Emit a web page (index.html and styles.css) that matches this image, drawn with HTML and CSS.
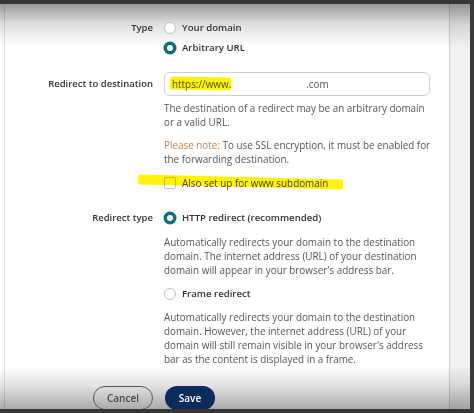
FILE: index.html
```html
<!DOCTYPE html>
<html>
<head>
<meta charset="utf-8">
<link rel="stylesheet" href="styles.css">
</head>
<body>
<div class="screen">
  <div class="bar"></div>
  <div class="middle">
    <div class="edge-left"></div>
    <div class="panel">
      <div class="row row-type">
        <div class="label">Type</div>
        <div class="field">
          <div class="option"><span class="radio"></span><span class="opt-text">Your domain</span></div>
          <div class="option"><span class="radio checked"></span><span class="opt-text">Arbitrary URL</span></div>
        </div>
      </div>
      <div class="row row-dest">
        <div class="label label-mid">Redirect to destination</div>
        <div class="field">
          <div class="input"><span class="url-start">https://www.</span><span class="url-end">.com</span><span class="mark mark-url"></span></div>
          <p class="hint">The destination of a redirect may be an arbitrary domain<br>or a valid URL.</p>
          <p class="hint note"><span class="note-label">Please note:</span> To use SSL encryption, it must be enabled for<br>the forwarding destination.</p>
          <div class="option check-option"><span class="checkbox"></span><span class="check-text">Also set up for www subdomain</span><span class="mark mark-check"></span></div>
        </div>
      </div>
      <div class="row row-rtype">
        <div class="label">Redirect type</div>
        <div class="field">
          <div class="option"><span class="radio checked"></span><span class="opt-text">HTTP redirect (recommended)</span></div>
          <p class="hint desc">Automatically redirects your domain to the destination<br>domain. The internet address (URL) of your destination<br>domain will appear in your browser's address bar.</p>
          <div class="option option-frame"><span class="radio"></span><span class="opt-text">Frame redirect</span></div>
          <p class="hint desc desc-frame">Automatically redirects your domain to the destination<br>domain. However, the internet address (URL) of your<br>domain will still remain visible in your browser's address<br>bar as the content is displayed in a frame.</p>
        </div>
      </div>
      <div class="actions">
        <button class="btn btn-cancel">Cancel</button>
        <button class="btn btn-save">Save</button>
      </div>
    </div>
    <div class="edge-right"></div>
    <div class="edge-dark"></div>
  </div>
  <div class="bar"></div>
</div>
</body>
</html>
```
FILE: styles.css
```css
html, body {
  margin: 0;
  padding: 0;
}
body {
  width: 474px;
  height: 413px;
  overflow: hidden;
  font-family: "Open Sans", "Liberation Sans", sans-serif;
  color: #3c3c3c;
  background: #2f2f2f;
}
.screen {
  display: flex;
  flex-direction: column;
  width: 474px;
  height: 413px;
}
.bar {
  height: 4px;
  background: #353535;
  flex: none;
}
.middle {
  flex: 1;
  display: flex;
  min-height: 0;
  background: linear-gradient(to bottom, rgba(0,0,0,0.4) 0, rgba(0,0,0,0.13) 20px, rgba(0,0,0,0) 42px, rgba(0,0,0,0) 362px, rgba(0,0,0,0.1) 380px, rgba(0,0,0,0.33) 100%), #fff;
}
.edge-left {
  width: 4px;
  flex: none;
  border-right: 1px solid rgba(0,0,0,0.12);
}
.edge-right {
  width: 20px;
  flex: none;
  border-left: 1px solid rgba(0,0,0,0.14);
  background: rgba(60,60,100,0.07);
}
.edge-dark {
  width: 4px;
  flex: none;
  background: #3a3a3a;
}
.panel {
  flex: 1;
  min-width: 0;
  overflow: hidden;
  padding-top: 14px;
  font-size: 9.9px;
  line-height: 14px;
}
.row {
  display: grid;
  grid-template-columns: 148px 1fr;
  column-gap: 11px;
  padding-right: 21px;
}
.label {
  text-align: right;
  font-weight: 600;
  color: #333;
  font-size: 9.5px;
  line-height: 20px;
}
.label-mid {
  line-height: 24px;
}
.field {
  display: flex;
  flex-direction: column;
}
.option {
  display: flex;
  align-items: center;
  gap: 6px;
  height: 20px;
  position: relative;
}
.opt-text {
  font-weight: 600;
  font-size: 9.6px;
  color: #333;
}
.radio {
  width: 10px;
  height: 10px;
  border-radius: 50%;
  border: 1px solid #bfbfbf;
  background: #fff;
  flex: none;
}
.radio.checked {
  width: 6px;
  height: 6px;
  border: 3px solid #0d6f80;
  background: #fff;
  box-shadow: 0 0 0 0.5px #0d6f80;
}
.row-dest {
  margin-top: 14px;
}
.input {
  position: relative;
  height: 24px;
  border: 1px solid #cfcfcf;
  border-radius: 6px;
  box-sizing: border-box;
  display: flex;
  align-items: center;
  padding-left: 7px;
  color: #555;
  font-size: 9.9px;
}
.url-end {
  margin-left: 75px;
}
.hint {
  margin: 5px 0 0;
  color: #555;
  white-space: nowrap;
}
.note {
  margin-top: 9px;
}
.note-label {
  color: #c9804a;
}
.check-option {
  margin-top: 7px;
}
.checkbox {
  width: 10px;
  height: 10px;
  border: 1px solid #c4c4c4;
  border-radius: 2px;
  flex: none;
}
.check-text {
  color: #444;
  font-size: 9.9px;
}
.mark {
  position: absolute;
  background: #fff200;
  mix-blend-mode: multiply;
  opacity: 0.95;
}
.mark-url {
  left: 5px;
  top: 4px;
  width: 61px;
  height: 13px;
  border-radius: 2px;
  transform: rotate(1deg);
}
.mark-check {
  left: -26px;
  top: 4px;
  width: 205px;
  height: 10px;
  transform: rotate(1.4deg);
  border-radius: 3px;
}
.row-rtype {
  margin-top: 15px;
}
.desc {
  margin-top: 7px;
}
.option-frame {
  margin-top: 7px;
}
.desc-frame {
  margin-top: 6px;
}
.actions {
  display: flex;
  gap: 12px;
  padding-left: 88px;
  margin-top: 20px;
}
.btn {
  height: 24px;
  border-radius: 12px;
  font-family: "Open Sans", "Liberation Sans", sans-serif;
  font-weight: 600;
  font-size: 10px;
  padding: 0;
}
.btn-cancel {
  width: 60px;
  background: transparent;
  border: 1.5px solid #5a5a5a;
  color: #4a4a4a;
}
.btn-save {
  width: 50px;
  background: #0b2b5c;
  border: none;
  color: #fff;
}
```
